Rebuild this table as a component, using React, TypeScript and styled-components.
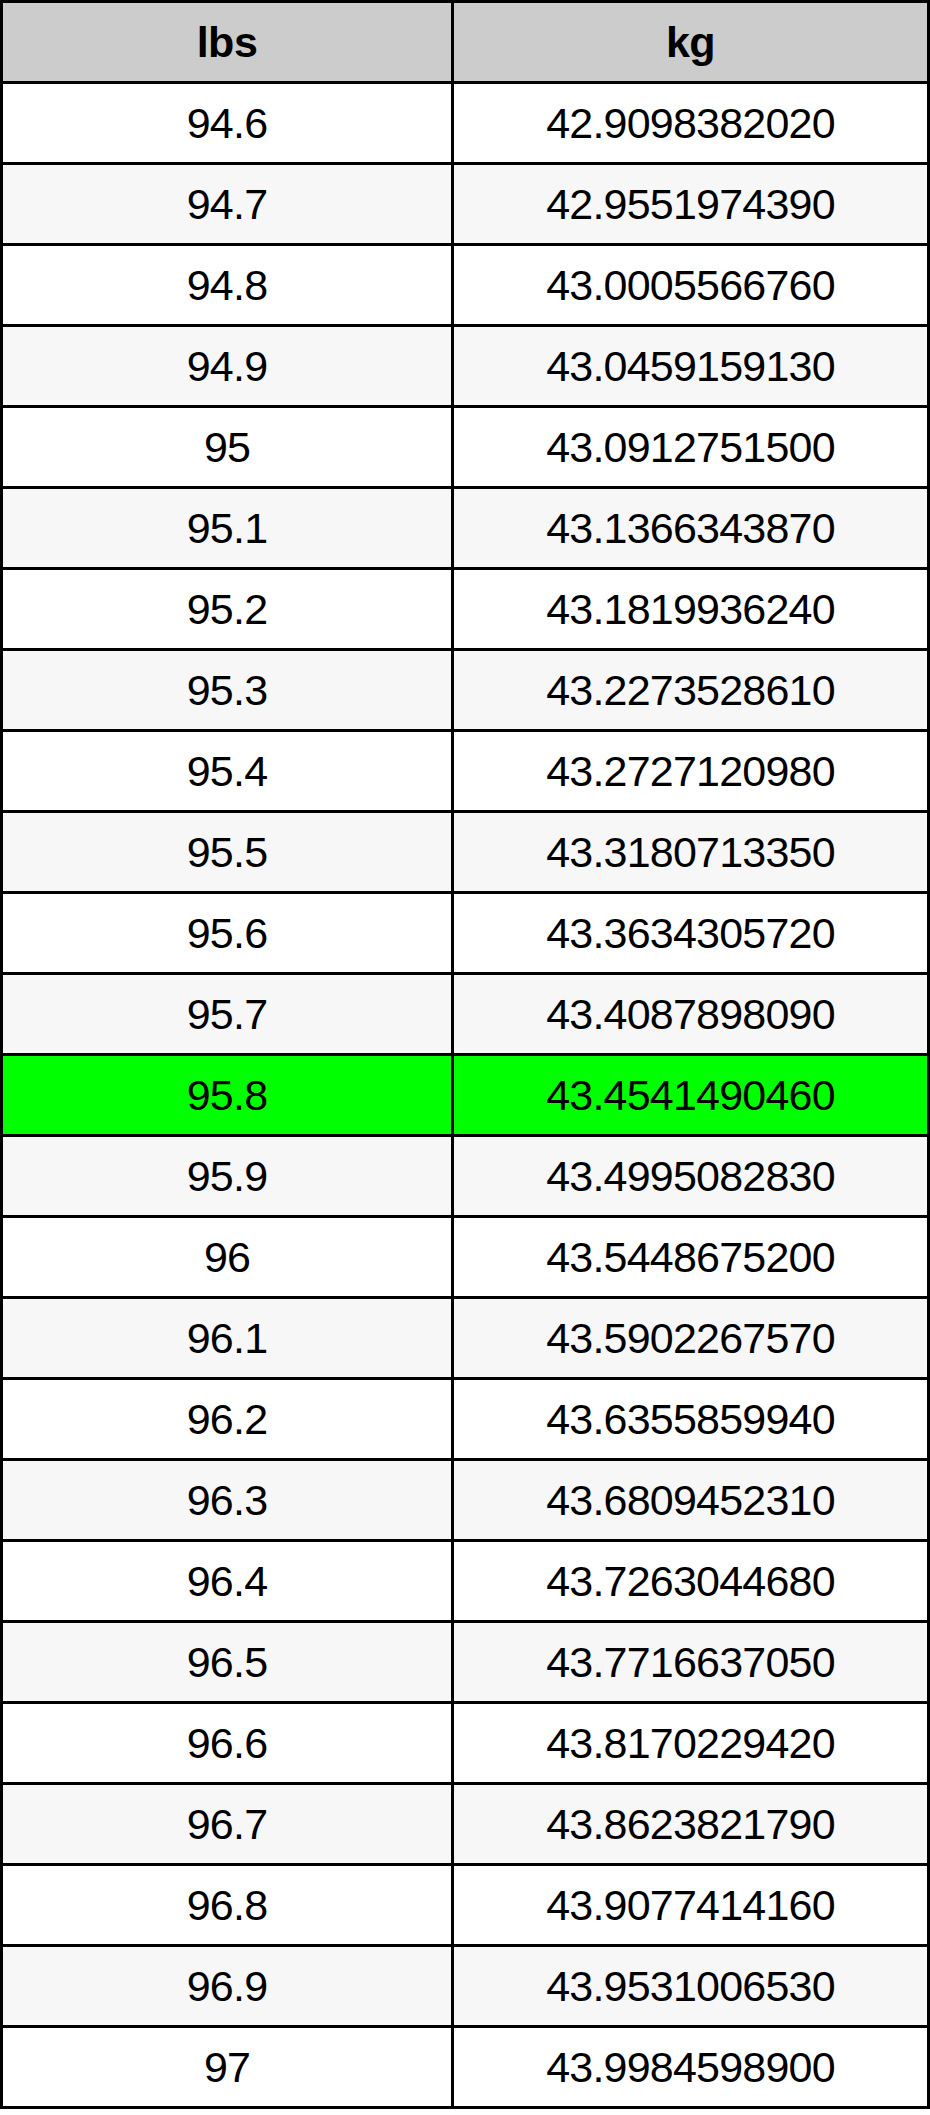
import React from 'react'
import styled, { createGlobalStyle } from 'styled-components'

const GlobalStyle = createGlobalStyle`
  html, body {
    margin: 0;
    padding: 0;
    background: #fff;
  }
  body {
    font-family: "Liberation Sans", Arial, Helvetica, sans-serif;
    color: #000;
  }
`

const Table = styled.div`
  display: grid;
  grid-template-columns: 448px 473px;
  grid-auto-rows: 78px;
  gap: 3px;
  padding: 3px;
  width: 930px;
  box-sizing: border-box;
  background: #000;
`

const Cell = styled.div<{ $bg: string; $head?: boolean }>`
  display: flex;
  align-items: center;
  justify-content: center;
  background: ${({ $bg }) => $bg};
  font-size: 43px;
  font-weight: ${({ $head }) => ($head ? 700 : 400)};
  letter-spacing: ${({ $head }) => ($head ? '-0.5px' : '-0.8px')};
  line-height: 1;
`

const rows: [string, string][] = [
  ['94.6', '42.9098382020'],
  ['94.7', '42.9551974390'],
  ['94.8', '43.0005566760'],
  ['94.9', '43.0459159130'],
  ['95', '43.0912751500'],
  ['95.1', '43.1366343870'],
  ['95.2', '43.1819936240'],
  ['95.3', '43.2273528610'],
  ['95.4', '43.2727120980'],
  ['95.5', '43.3180713350'],
  ['95.6', '43.3634305720'],
  ['95.7', '43.4087898090'],
  ['95.8', '43.4541490460'],
  ['95.9', '43.4995082830'],
  ['96', '43.5448675200'],
  ['96.1', '43.5902267570'],
  ['96.2', '43.6355859940'],
  ['96.3', '43.6809452310'],
  ['96.4', '43.7263044680'],
  ['96.5', '43.7716637050'],
  ['96.6', '43.8170229420'],
  ['96.7', '43.8623821790'],
  ['96.8', '43.9077414160'],
  ['96.9', '43.9531006530'],
  ['97', '43.9984598900'],
]

const HIGHLIGHT = '95.8'

const rowColor = (lbs: string, i: number) => {
  if (lbs === HIGHLIGHT) return '#00ff00'
  return i % 2 === 0 ? '#ffffff' : '#f7f7f7'
}

export default function App() {
  return (
    <>
      <GlobalStyle />
      <Table>
        <Cell $bg="#cccccc" $head>lbs</Cell>
        <Cell $bg="#cccccc" $head>kg</Cell>
        {rows.map(([lbs, kg], i) => (
          <React.Fragment key={lbs}>
            <Cell $bg={rowColor(lbs, i)}>{lbs}</Cell>
            <Cell $bg={rowColor(lbs, i)}>{kg}</Cell>
          </React.Fragment>
        ))}
      </Table>
    </>
  )
}
